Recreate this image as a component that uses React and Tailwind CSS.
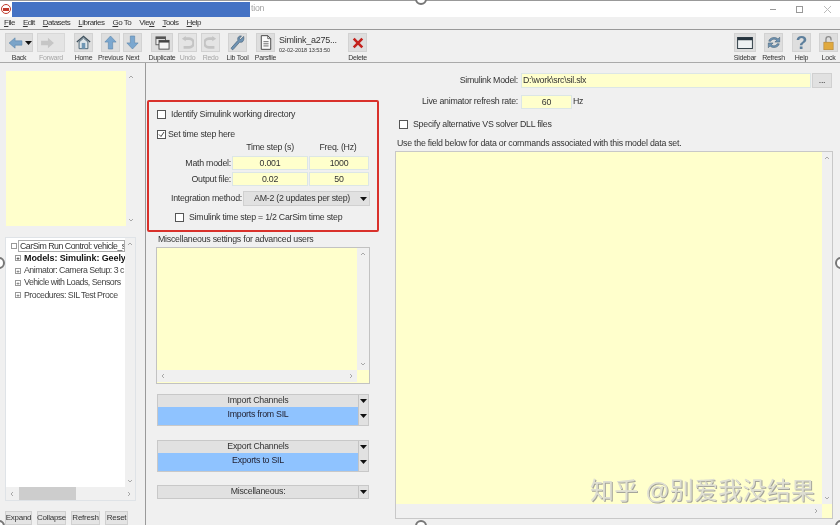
const FONT = "font-['Liberation_Sans',Arial,'Noto_Sans_CJK_SC',sans-serif]";

const Tri = ({ className = "" }) => (
  <svg width="7" height="4" viewBox="0 0 7 4" className={className}><path d="M0 0H7L3.500 4Z" fill="#111" /></svg>
);
const Icons = {
  back: <svg width="15" height="12" viewBox="0 0 17 14"><path d="M1 7 8 1V4.500H16V9.500H8V13Z" fill="#7ba4c9" stroke="#5d86ab" strokeWidth=".7" /></svg>,
  forward: <svg width="15" height="12" viewBox="0 0 17 14"><path d="M16 7 9 1V4.500H1V9.500H9V13Z" fill="#c6c6c6" /></svg>,
  home: <svg width="15" height="15" viewBox="0 0 17 17"><path d="M1 8 8.500 1.500 16 8" fill="none" stroke="#3d4f5c" strokeWidth="1.600" /><path d="M3.500 8V15.500H13.500V8L8.500 3.500Z" fill="#dfe6ea" stroke="#3d5a6c" /><rect x="6.500" y="9" width="4" height="6.500" fill="#6f97b5" /></svg>,
  up: <svg width="13" height="15" viewBox="0 0 15 17"><path d="M7.500 1 14 8H10V16H5V8H1Z" fill="#7ba7cf" stroke="#5d86ab" strokeWidth=".7" /></svg>,
  down: <svg width="13" height="15" viewBox="0 0 15 17"><path d="M7.500 16 14 9H10V1H5V9H1Z" fill="#7ba7cf" stroke="#5d86ab" strokeWidth=".7" /></svg>,
  duplicate: <svg width="15" height="14" viewBox="0 0 17 16"><rect x="1" y="1" width="11" height="9" fill="#eee" stroke="#555" /><rect x="1" y="1" width="11" height="2.500" fill="#555" /><rect x="4.500" y="5" width="11.500" height="10" fill="#f4f4f4" stroke="#444" /><rect x="4.500" y="5" width="11.500" height="2.500" fill="#444" /></svg>,
  undo: <svg width="13" height="14" viewBox="0 0 15 16"><path d="M4 3H9.500A4.500 4.500 0 0 1 9.500 13H3" fill="none" stroke="#c4c4c4" strokeWidth="3" /><path d="M5.500 0V6L1 3Z" fill="#c4c4c4" /></svg>,
  redo: <svg width="13" height="14" viewBox="0 0 15 16"><path d="M11 3H5.500A4.500 4.500 0 0 0 5.500 13H12" fill="none" stroke="#c4c4c4" strokeWidth="3" /><path d="M9.500 0V6L14 3Z" fill="#c4c4c4" /></svg>,
  wrench: <svg width="15" height="16" viewBox="0 0 17 18"><path d="M15.500 1.500 12 5 10.500 4 13 1C10 .5 8 3 9 6L1.500 14.500C1 15.500 2.500 17 3.500 16.500L11 8C13.500 9 16.500 7 15.500 1.500Z" fill="#6f93b3" stroke="#3f5a70" strokeWidth=".7" /></svg>,
  file: <svg width="12" height="15" viewBox="0 0 14 17"><path d="M1.500 .5H9L12.500 4V16.500H1.500Z" fill="#fafafa" stroke="#333" /><path d="M9 .5V4H12.500M4 7.500H10M4 10H10M4 12.500H10" fill="none" stroke="#333" strokeWidth=".8" /></svg>,
  del: <svg width="12" height="12" viewBox="0 0 14 14"><path d="M2 2 12 12M12 2 2 12" stroke="#c3211c" strokeWidth="3" /></svg>,
  sidebar: <svg width="16" height="12" viewBox="0 0 17 13"><rect x=".5" y=".5" width="16" height="12" fill="#eef1f3" stroke="#26343e" /><rect x=".5" y=".5" width="16" height="3" fill="#26343e" /></svg>,
  refresh: <svg width="14" height="15" viewBox="0 0 16 17"><path d="M2 7C3 2.500 9.500 1.500 12.500 4.500L14.500 2.500V8H9L11 6C9 4 5.500 4.500 4.500 7ZM14 10C13 14.500 6.500 15.500 3.500 12.500L1.500 14.500V9H7L5 11C7 13 10.500 12.500 11.500 10Z" fill="#6f93b3" stroke="#3f5a70" strokeWidth=".6" /></svg>,
  help: <span className="text-[19px] font-bold leading-none text-[#5d7f9c]">?</span>,
  lock: <svg width="11" height="16" viewBox="0 0 13 18"><path d="M3.500 8V4.500A3 3 0 0 1 9.500 4.500V6" fill="none" stroke="#8a8a8a" strokeWidth="1.500" /><rect x="1" y="8" width="11" height="9" fill="#e0a93e" stroke="#a8792a" strokeWidth=".6" /></svg>,
};

const Label = ({ gray, children }) => (
  <div className="w-full mt-[1px] flex justify-center">
    <span className={`text-[7px] tracking-[-0.25px] leading-[9px] whitespace-nowrap ${gray ? "text-[#a5a5a5]" : "text-[#333]"}`}>{children}</span>
  </div>
);

const Tool = ({ icon, label, w = "w-[19px]", gray, dim, ml = "ml-0" }) => (
  <div className={`${ml} ${w} shrink-0 flex flex-col items-center`}>
    <div className={`w-full h-[19px] flex items-center justify-center ${dim ? "bg-[#e4e4e4]" : "bg-[#dedede]"} border border-[#d2d2d2]`}>{icon}</div>
    <Label gray={gray}>{label}</Label>
  </div>
);

const Check = ({ checked }) => (
  <span className="w-[9px] h-[9px] shrink-0 border border-[#555] bg-white flex items-center justify-center">
    {checked && <svg width="7" height="7" viewBox="0 0 7 7"><path d="M1 3.500 3 5.500 6 1" fill="none" stroke="#444" strokeWidth="1" /></svg>}
  </span>
);

const Field = ({ children, className = "" }) => (
  <div className={`h-[14px] bg-[#ffffcc] border border-[#dce6e6] flex items-center justify-center ${className}`}>{children}</div>
);

const Drop = ({ title, sub }) => (
  <div className="w-[212px] ml-[11px] border border-[#c8c8c8] bg-[#e1e1e1]">
    <div className="h-[12px] flex">
      <div className="flex-1 flex items-center justify-center">{title}</div>
      <div className="w-[10px] border-l border-[#c4c4c4] flex items-center justify-center"><Tri /></div>
    </div>
    {sub && (
      <div className="h-[18px] flex">
        <div className="flex-1 bg-[#8fc3ff] flex items-start justify-center pt-[1px] text-[#223]">{sub}</div>
        <div className="w-[10px] border-l border-[#c4c4c4] flex items-center justify-center"><Tri /></div>
      </div>
    )}
  </div>
);

const Chev = ({ d }) => (
  <svg width="6" height="6" viewBox="0 0 6 6"><path d={d} fill="none" stroke="#a8a8a8" strokeWidth="1" /></svg>
);

const VScroll = ({ className = "" }) => (
  <div className={`w-[10px] bg-[#f0f0f0] flex flex-col items-center justify-between py-[3px] ${className}`}>
    <Chev d="M1 4 3 2 5 4" />
    <Chev d="M1 2 3 4 5 2" />
  </div>
);

const TreeRow = ({ children, bold }) => (
  <div className={`flex items-center h-[12.300px] pl-[9px] whitespace-nowrap ${bold ? "font-bold text-[9px] tracking-[-0.1px] text-[#111]" : "tracking-[-0.5px] text-[#444]"}`}>
    <span className="w-[6px] h-[6px] mr-[3px] shrink-0 border border-[#999] flex items-center justify-center text-[6px] leading-none tracking-normal">+</span>
    {children}
  </div>
);

const Handle = ({ className }) => (
  <span className={`absolute w-[12px] h-[12px] rounded-full bg-white border-2 border-[#777] ${className}`} />
);

export default function App() {
  return (
    <div className={`${FONT} relative w-[840px] h-[525px] overflow-hidden bg-[#f0f0f0] flex flex-col blur-[0.3px] text-[8.800px] tracking-[-0.25px] text-[#333]`}>
      {/* title bar */}
      <div className="h-[17px] shrink-0 bg-white border-t border-[#999] flex items-center">
        <span className="ml-[1px] w-[10px] h-[10px] rounded-full bg-[#fff] border border-[#c0392b] flex items-center justify-center">
          <span className="w-[6px] h-[3px] bg-[#c0392b]" />
        </span>
        <div className="ml-[1px] w-[238px] h-[15px] bg-[#4472c4]" />
        <span className="ml-[1px] text-[#a5a5a5]">tion</span>
        <div className="ml-auto flex items-center">
          <span className="w-[6px] h-px bg-[#999] mr-[20px]" />
          <span className="w-[7px] h-[7px] border border-[#999] mr-[21px]" />
          <svg width="7" height="7" viewBox="0 0 7 7" className="mr-[9px]"><path d="M0 0 7 7M7 0 0 7" stroke="#bbb" /></svg>
        </div>
      </div>
      {/* menu */}
      <div className="h-[13px] shrink-0 border-b border-[#999] flex items-center pl-[4px] gap-[8px] text-[8px] tracking-[-0.5px]">
        <span><u>F</u>ile</span><span><u>E</u>dit</span><span><u>D</u>atasets</span><span><u>L</u>ibraries</span>
        <span><u>G</u>o To</span><span>Vie<u>w</u></span><span><u>T</u>ools</span><span><u>H</u>elp</span>
      </div>
      {/* toolbar */}
      <div className="h-[33px] shrink-0 border-b border-[#aaa] flex items-start pt-[3px] pl-[5px] pr-[2px]">
        <div className="w-[28px] flex flex-col items-center">
          <div className="w-full h-[19px] flex items-center bg-[#dedede] border border-[#d2d2d2] pl-[2px]">{Icons.back}<Tri className="ml-[2px]" /></div>
          <Label>Back</Label>
        </div>
        <div className="ml-[4px] w-[28px] flex flex-col items-center">
          <div className="w-full h-[19px] flex items-center bg-[#e4e4e4] border border-[#d8d8d8] pl-[2px]">{Icons.forward}</div>
          <Label gray>Forward</Label>
        </div>
        <Tool ml="ml-[9px]" icon={Icons.home} label="Home" />
        <Tool ml="ml-[8px]" icon={Icons.up} label="Previous" />
        <Tool ml="ml-[3px]" icon={Icons.down} label="Next" />
        <Tool ml="ml-[9px]" w="w-[22px]" icon={Icons.duplicate} label="Duplicate" />
        <Tool ml="ml-[5px]" icon={Icons.undo} label="Undo" gray dim />
        <Tool ml="ml-[4px]" icon={Icons.redo} label="Redo" gray dim />
        <Tool ml="ml-[8px]" icon={Icons.wrench} label="Lib Tool" />
        <Tool ml="ml-[9px]" icon={Icons.file} label="Parsfile" />
        <div className="ml-[4px] w-[64px] pt-[1px]">
          <div className="text-[9px] leading-[12px] whitespace-nowrap">Simlink_a275...</div>
          <div className="text-[5.500px] tracking-normal leading-[9px] whitespace-nowrap">02-02-2018 13:53:50</div>
        </div>
        <Tool ml="ml-[5px]" icon={Icons.del} label="Delete" />
        <div className="ml-auto flex">
          <Tool w="w-[22px]" icon={Icons.sidebar} label="Sidebar" />
          <Tool ml="ml-[8px]" icon={Icons.refresh} label="Refresh" />
          <Tool ml="ml-[9px]" icon={Icons.help} label="Help" />
          <Tool ml="ml-[8px]" icon={Icons.lock} label="Lock" />
        </div>
      </div>
      {/* body */}
      <div className="flex-1 flex min-h-0">
        {/* sidebar */}
        <div className="w-[146px] shrink-0 border-r border-[#9a9a9a] flex flex-col pl-[6px] pt-[8px]">
          <div className="w-[130px] h-[157px] flex">
            <div className="flex-1 bg-[#ffffcc]" />
            <VScroll />
          </div>
          <div className="mt-[11px] ml-[-1px] w-[131px] h-[267px] bg-white border border-[#dfe3e7] flex flex-col">
            <div className="flex-1 flex min-h-0">
              <div className="flex-1 min-w-0 overflow-hidden pt-[1px]">
                <div className="flex items-center pl-[5px] h-[13px]">
                  <span className="w-[6px] h-[6px] shrink-0 border border-[#999]" />
                  <span className="ml-[1px] border border-[#aaa] pl-[1px] h-[12px] leading-[10px] tracking-[-0.5px] whitespace-nowrap overflow-hidden flex-1">CarSim Run Control: vehicle_s</span>
                </div>
                <TreeRow bold>Models: Simulink: Geely</TreeRow>
                <TreeRow>Animator: Camera Setup: 3 c</TreeRow>
                <TreeRow>Vehicle with Loads, Sensors</TreeRow>
                <TreeRow>Procedures: SIL Test Proce</TreeRow>
              </div>
              <VScroll className="w-[9px]" />
            </div>
            <div className="h-[13px] bg-[#f0f0f0] flex items-center justify-between px-[3px]">
              <Chev d="M4 1 2 3 4 5" />
              <div className="w-[57px] h-full bg-[#cdcdcd] mr-[47px]" />
              <Chev d="M2 1 4 3 2 5" />
            </div>
          </div>
          <div className="mt-[10px] ml-[-1px] flex gap-[5px] text-[8px]">
            <span className="w-[27px] h-[14px] bg-[#e4e4e4] border border-[#d0d0d0] flex justify-center">Expand</span>
            <span className="w-[29px] h-[14px] bg-[#e4e4e4] border border-[#d0d0d0] flex justify-center">Collapse</span>
            <span className="w-[29px] h-[14px] bg-[#e4e4e4] border border-[#d0d0d0] flex justify-center">Refresh</span>
            <span className="w-[23px] h-[14px] bg-[#e4e4e4] border border-[#d0d0d0] flex justify-center">Reset</span>
          </div>
        </div>
        {/* middle */}
        <div className="w-[238px] shrink-0 pt-[37px] flex flex-col">
          <div className="ml-[1px] w-[232px] h-[132px] border-2 border-[#d9312b] rounded-[2px] flex flex-col leading-[11px]">
            <div className="flex items-center mt-[7px] ml-[8px] gap-[5px]"><Check /><span>Identify Simulink working directory</span></div>
            <div className="flex items-center mt-[9px] ml-[8px] gap-[2px]"><Check checked /><span>Set time step here</span></div>
            <div className="flex mt-[2px] ml-[83px]">
              <span className="w-[76px] text-center">Time step (s)</span>
              <span className="w-[60px] text-center">Freq. (Hz)</span>
            </div>
            <div className="flex items-center mt-[3px]">
              <span className="w-[83px] text-right pr-[1px]">Math model:</span>
              <Field className="w-[76px]">0.001</Field>
              <Field className="w-[60px] ml-[1px]">1000</Field>
            </div>
            <div className="flex items-center mt-[2px]">
              <span className="w-[83px] text-right pr-[1px]">Output file:</span>
              <Field className="w-[76px]">0.02</Field>
              <Field className="w-[60px] ml-[1px]">50</Field>
            </div>
            <div className="flex items-center mt-[5px]">
              <span className="w-[93px] text-right">Integration method:</span>
              <div className="ml-[1px] w-[127px] h-[15px] bg-[#e1e1e1] border border-[#d0d0d0] flex items-center">
                <span className="flex-1 text-center">AM-2 (2 updates per step)</span>
                <Tri className="mr-[2px]" />
              </div>
            </div>
            <div className="flex items-center mt-[6px] ml-[26px] gap-[5px]"><Check /><span>Simulink time step = 1/2 CarSim time step</span></div>
          </div>
          <div className="mt-[1px] ml-[12px] leading-[12px]">Miscellaneous settings for advanced users</div>
          <div className="mt-[2px] ml-[10px] w-[214px] h-[137px] border border-[#c2c2c2] bg-[#ffffcc] flex flex-col">
            <div className="flex-1 flex"><div className="flex-1" /><VScroll className="w-[12px]" /></div>
            <div className="h-[12px] mb-[1px] flex">
              <div className="flex-1 bg-[#f0f0f0] flex items-center justify-between px-[3px]"><Chev d="M4 1 2 3 4 5" /><Chev d="M2 1 4 3 2 5" /></div>
              <div className="w-[12px]" />
            </div>
          </div>
          <div className="mt-[10px]"><Drop title="Import Channels" sub="Imports from SIL" /></div>
          <div className="mt-[14px]"><Drop title="Export Channels" sub="Exports to SIL" /></div>
          <div className="mt-[13px]"><Drop title="Miscellaneous:" /></div>
        </div>
        {/* right */}
        <div className="flex-1 min-w-0 flex flex-col pt-[10px]">
          <div className="flex items-center h-[15px]">
            <span className="w-[134px] text-right">Simulink Model:</span>
            <div className="ml-[3px] w-[290px] h-[15px] bg-[#ffffcc] border border-[#dce6e6] pl-[1px] leading-[13px]">D:\work\src\sil.slx</div>
            <span className="ml-[1px] w-[20px] h-[15px] bg-[#e1e1e1] border border-[#d0d0d0] text-center leading-[13px]">...</span>
          </div>
          <div className="flex items-center h-[14px] mt-[7px]">
            <span className="w-[134px] text-right">Live animator refresh rate:</span>
            <div className="ml-[3px] w-[51px] h-[14px] bg-[#ffffcc] border border-[#dce6e6] text-center leading-[12px]">60</div>
            <span className="ml-[1px]">Hz</span>
          </div>
          <div className="flex items-center mt-[10px] ml-[15px] gap-[5px] leading-[11px]"><Check /><span>Specify alternative VS solver DLL files</span></div>
          <div className="mt-[7px] ml-[13px] leading-[12px]">Use the field below  for data or commands associated with this model data set.</div>
          <div className="mt-[2px] ml-[11px] w-[438px] h-[368px] border border-[#c8c8c8] bg-[#ffffcc] flex flex-col">
            <div className="flex-1 flex"><div className="flex-1" /><VScroll /></div>
            <div className="h-[14px] flex">
              <div className="flex-1 bg-[#f0f0f0] flex items-center justify-end pr-[3px]"><Chev d="M2 1 4 3 2 5" /></div>
              <div className="w-[10px]" />
            </div>
          </div>
        </div>
      </div>
      {/* watermark */}
      <div className="absolute left-[590px] top-[476px] text-[24px] leading-[30px] tracking-[0.2px] text-[#deded2] [text-shadow:1px_1px_0_#a5a59c] whitespace-nowrap">知乎 @别爱我没结果</div>
      {/* picture frame handles */}
      <Handle className="left-[415px] -top-[7px]" />
      <Handle className="-left-[7px] top-[257px]" />
      <Handle className="-right-[7px] top-[257px]" />
      <Handle className="left-[415px] -bottom-[7px]" />
      <Handle className="-left-[7px] -bottom-[7px]" />
      <Handle className="-right-[7px] -bottom-[7px]" />
    </div>
  );
}
